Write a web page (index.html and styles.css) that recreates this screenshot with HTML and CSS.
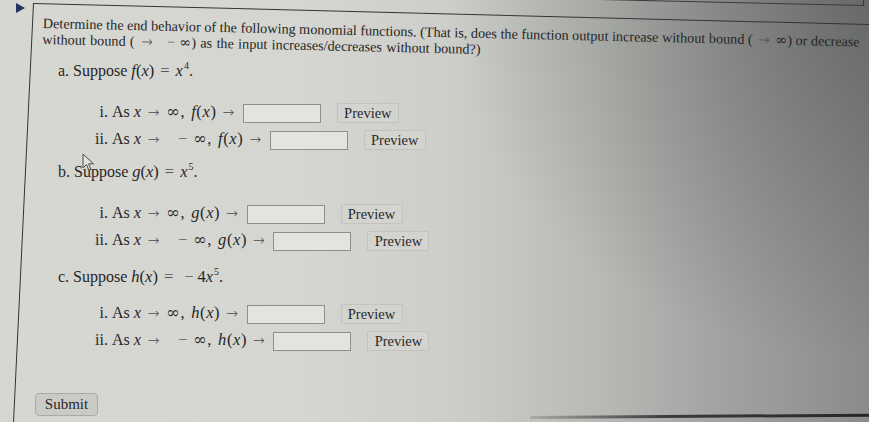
FILE: index.html
```html
<!DOCTYPE html>
<html lang="en">
<head>
<meta charset="utf-8">
<title>End behavior of monomial functions</title>
<link rel="stylesheet" href="styles.css">
</head>
<body>
<div class="page">
  <span class="marker"></span>
  <div class="card">
    <p class="intro">Determine the end behavior of the following monomial functions. (That is, does the function output increase without bound ( <span class="rel">→</span> <span class="inf">∞</span>) or decrease<br><span class="line2">without bound ( <span class="rel">→</span> <span class="neg">−</span> <span class="inf">∞</span>) as the input increases/decreases without bound?)</span></p>

    <section class="part">
      <p class="lead">a. Suppose <span class="m"><i>f</i>(<i>x</i>)<span class="eq">=</span><i>x</i><sup>4</sup></span>.</p>
      <ol class="steps">
        <li>As <span class="m"><i>x</i><span class="rel">→</span><span class="inf">∞</span><span class="sep">,</span><i>f</i>(<i>x</i>)<span class="rel">→</span></span><input class="answer" type="text"><button class="preview" type="button">Preview</button></li>
        <li>As <span class="m"><i>x</i><span class="rel">→</span><span class="neg">−</span><span class="inf">∞</span><span class="sep">,</span><i>f</i>(<i>x</i>)<span class="rel">→</span></span><input class="answer" type="text"><button class="preview" type="button">Preview</button></li>
      </ol>
    </section>

    <section class="part">
      <p class="lead has-cursor">b. Suppose <span class="m"><i>g</i>(<i>x</i>)<span class="eq">=</span><i>x</i><sup>5</sup></span>.
        <svg class="cursor" width="14" height="20" viewBox="0 0 14 20" aria-hidden="true"><path d="M1 1 L1 15 L4.5 11.5 L7 17.5 L9 16.6 L6.6 10.8 L11.5 10.8 Z" fill="rgba(235,235,232,0.55)" stroke="#4a4a4a" stroke-width="1" stroke-linejoin="round"/></svg>
      </p>
      <ol class="steps">
        <li>As <span class="m"><i>x</i><span class="rel">→</span><span class="inf">∞</span><span class="sep">,</span><i>g</i>(<i>x</i>)<span class="rel">→</span></span><input class="answer" type="text"><button class="preview" type="button">Preview</button></li>
        <li>As <span class="m"><i>x</i><span class="rel">→</span><span class="neg">−</span><span class="inf">∞</span><span class="sep">,</span><i>g</i>(<i>x</i>)<span class="rel">→</span></span><input class="answer" type="text"><button class="preview" type="button">Preview</button></li>
      </ol>
    </section>

    <section class="part part-last">
      <p class="lead">c. Suppose <span class="m"><i>h</i>(<i>x</i>)<span class="eq">=</span><span class="neg">−</span>4<i>x</i><sup>5</sup></span>.</p>
      <ol class="steps">
        <li>As <span class="m"><i>x</i><span class="rel">→</span><span class="inf">∞</span><span class="sep">,</span><i>h</i>(<i>x</i>)<span class="rel">→</span></span><input class="answer" type="text"><button class="preview" type="button">Preview</button></li>
        <li>As <span class="m"><i>x</i><span class="rel">→</span><span class="neg">−</span><span class="inf">∞</span><span class="sep">,</span><i>h</i>(<i>x</i>)<span class="rel">→</span></span><input class="answer" type="text"><button class="preview" type="button">Preview</button></li>
      </ol>
    </section>

    <div class="actions">
      <button class="submit" type="button">Submit</button>
    </div>
  </div>
</div>
</body>
</html>
```

FILE: styles.css
```css
html, body {
  margin: 0;
  padding: 0;
  height: 100%;
  overflow: hidden;
}

body {
  font-family: "Liberation Serif", "Times New Roman", serif;
  color: #262626;
  background:
    radial-gradient(ellipse 420px 360px at 100% 0%, rgba(30, 32, 32, 0.32), rgba(30, 32, 32, 0) 100%),
    linear-gradient(90deg, #d7d7d2 0%, #d5d6d1 35%, #cdcec9 52%, #b9bbb7 68%, #a0a2a0 84%, #8a8c8b 100%);
}

.page {
  position: relative;
  display: flex;
  align-items: flex-start;
  height: 422px;
  overflow: hidden;
}

/* corner of the previous problem's box, above */
.page::before {
  content: "";
  position: absolute;
  left: 600px;
  top: -10px;
  width: 263px;
  height: 15px;
  border-right: 1px solid #3a3c3c;
  border-bottom: 1px solid #3a3c3c;
  transform-origin: 100% 100%;
  transform: rotate(1.3deg);
}

/* dark monitor edge at the bottom right */
.page::after {
  content: "";
  position: absolute;
  left: 530px;
  top: 416px;
  width: 345px;
  height: 3px;
  background: linear-gradient(90deg, rgba(40, 40, 40, 0.15), #3a3b3b 40%, #252626);
  transform-origin: 0 0;
  transform: rotate(-0.4deg);
}

.marker {
  flex: none;
  width: 0;
  height: 0;
  margin: 3px 8px 0 16px;
  border-top: 5px solid transparent;
  border-bottom: 5px solid transparent;
  border-left: 9px solid #1d3560;
}

.card {
  position: relative;
  flex: 1;
  margin-top: 3px;
  height: 419px;
  padding: 12px 0 0 10px;
  box-sizing: border-box;
}

/* top edge of the frame, slanted by the photo's perspective */
.card::before {
  content: "";
  position: absolute;
  left: 0;
  top: 0;
  width: 100%;
  height: 0;
  border-top: 1px solid #333535;
  transform-origin: 0 0;
  transform: skewY(1.44deg);
  pointer-events: none;
}

/* left edge of the frame */
.card::after {
  content: "";
  position: absolute;
  left: 0;
  top: 0;
  width: 0;
  height: 100%;
  border-left: 1px solid #333535;
  transform-origin: 0 0;
  transform: skewX(-2.73deg);
  pointer-events: none;
}

.intro {
  margin: 0;
  font-size: 14.2px;
  line-height: 16px;
  white-space: nowrap;
  transform-origin: 0 0;
  transform: rotate(1.3deg);
}

.line2 {
  word-spacing: 0.8px;
}

.rel {
  font-family: "DejaVu Sans", sans-serif;
  font-size: 14px;
  font-weight: 300;
  color: #4a4a4a;
  margin: 0 2px;
}

.inf {
  font-family: "DejaVu Serif", serif;
}

.intro .neg {
  margin-left: 8px;
}

.neg {
  color: #6a6a6a;
}

/* inline math */
.m {
  font-size: 16.5px;
  white-space: nowrap;
}

.steps .m {
  letter-spacing: 0.6px;
}

.m .rel {
  margin: 0 6px;
}

.m .eq {
  color: #555;
  margin: 0 6px;
}

.m .neg {
  margin: 0 5px 0 12px;
}

.m .eq + .neg {
  margin-left: 5px;
  margin-right: 4px;
}

.sep {
  margin-right: 6px;
}

i {
  font-style: italic;
}

sup {
  font-size: 10px;
  line-height: 0;
  vertical-align: 7px;
  margin-left: 1px;
}

.part {
  margin-top: 10px;
}

.part:first-of-type {
  margin-top: 14px;
}

.part-last {
  margin-top: 14px;
}

.lead {
  margin: 0 0 0 15px;
  font-size: 16px;
  line-height: 20px;
}

.has-cursor {
  position: relative;
}

.cursor {
  position: absolute;
  left: 24px;
  top: -9px;
}

.steps {
  margin: 17px 0 0;
  padding-left: 69px;
  list-style: lower-roman;
  font-size: 16px;
}

.part-last .steps {
  margin-top: 12px;
}

.steps li {
  height: 27px;
  line-height: 27px;
}

.answer {
  box-sizing: border-box;
  width: 78px;
  height: 19px;
  margin: 0 0 0 2px;
  padding: 0;
  vertical-align: middle;
  background: #e3e4e0;
  border: 1px solid #8e908e;
  border-radius: 0;
}

.preview {
  box-sizing: border-box;
  width: 62px;
  height: 20px;
  margin-left: 16px;
  padding: 0;
  vertical-align: middle;
  font-family: "Liberation Serif", "Times New Roman", serif;
  font-size: 14.5px;
  line-height: 18px;
  color: #2a2a2a;
  background: #d3d4d0;
  border: 1px solid #c2c3bf;
  border-radius: 1px;
}

.actions {
  margin-top: 40px;
}

.submit {
  box-sizing: border-box;
  width: 63px;
  height: 23px;
  margin-left: -8px;
  padding: 0;
  font-family: "Liberation Serif", "Times New Roman", serif;
  font-size: 15px;
  color: #262626;
  background: #cacbc6;
  border: 1px solid #a9aaa6;
  border-radius: 4px;
}
```
